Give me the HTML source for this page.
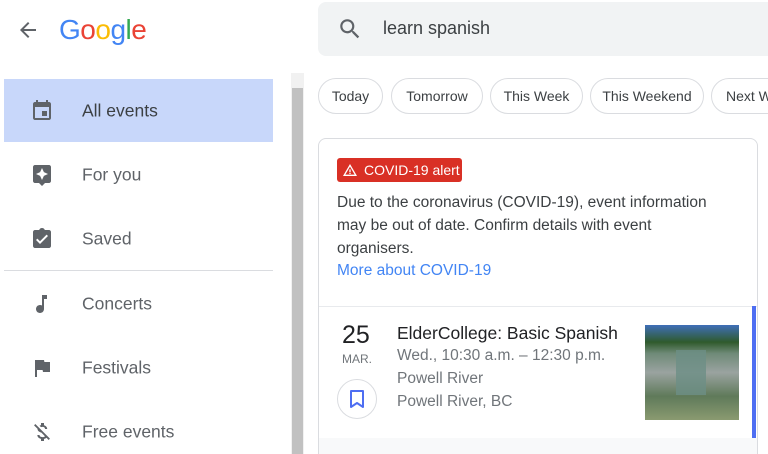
<!DOCTYPE html>
<html><head><style>
html,body{margin:0;width:768px;height:454px;overflow:hidden;background:#fff;font-family:"Liberation Sans",Arial,sans-serif;position:relative}
.a{position:absolute}
.nav{left:4px;width:269px;height:63px}
.nav span{position:absolute;left:78px;top:50%;transform:translateY(-50%);font-size:17.5px;color:#5f6368}
.nav svg{position:absolute;left:26px;top:50%;margin-top:-12px}
.chip{top:78px;height:36px;border:1px solid #dadce0;border-radius:18px;box-sizing:border-box;font-size:14px;color:#3c4043;line-height:34px;text-align:center}
.g{color:#70757a;font-size:15.5px}
</style></head><body>
<svg class="a" style="left:16px;top:18px" width="24" height="24" viewBox="0 0 24 24"><path d="M20 11H7.8l5.6-5.6L12 4l-8 8 8 8 1.4-1.4L7.8 13H20z" fill="#5f6368"/></svg>
<div class="a" style="left:59px;top:14px;font-size:28px;letter-spacing:-0.5px"><span style="color:#4285f4">G</span><span style="color:#ea4335">o</span><span style="color:#fbbc05">o</span><span style="color:#4285f4">g</span><span style="color:#34a853">l</span><span style="color:#ea4335">e</span></div>

<div class="a nav" style="top:79px;background:#c8d7fa"><svg width="24" height="24" viewBox="0 0 24 24"><path d="M17 12h-5v5h5v-5zM16 1v2H8V1H6v2H5c-1.1 0-2 .9-2 2v14c0 1.1.9 2 2 2h14c1.1 0 2-.9 2-2V5c0-1.1-.9-2-2-2h-1V1h-2zm3 18H5V8h14v11z" fill="#5f6368"/></svg><span style="color:#3c4043">All events</span></div>
<div class="a nav" style="top:143px"><svg width="24" height="24" viewBox="0 0 24 24"><path d="M19 2H5c-1.1 0-2 .9-2 2v14c0 1.1.9 2 2 2h4l3 3 3-3h4c1.1 0 2-.9 2-2V4c0-1.1-.9-2-2-2zm-5.1 10.9L12 17l-1.9-4.1L6 11l4.1-1.9L12 5l1.9 4.1L18 11l-4.1 1.9z" fill="#5f6368"/></svg><span>For you</span></div>
<div class="a nav" style="top:207px"><svg width="24" height="24" viewBox="0 0 24 24"><path d="M19 3h-4.2C14.4 1.8 13.3 1 12 1s-2.4.8-2.8 2H5c-1.1 0-2 .9-2 2v14c0 1.1.9 2 2 2h14c1.1 0 2-.9 2-2V5c0-1.1-.9-2-2-2zm-9 14l-4-4 1.4-1.4 2.6 2.6 6.6-6.6L18 9l-8 8z" fill="#5f6368"/></svg><span>Saved</span></div>
<div class="a" style="left:4px;top:270px;width:269px;height:1px;background:#dadce0"></div>
<div class="a nav" style="top:272px"><svg width="24" height="24" viewBox="0 0 24 24"><path d="M12 3v10.55c-.59-.34-1.27-.55-2-.55-2.21 0-4 1.79-4 4s1.79 4 4 4 4-1.79 4-4V7h3V3h-5z" fill="#5f6368"/></svg><span>Concerts</span></div>
<div class="a nav" style="top:336px"><svg width="24" height="24" viewBox="0 0 24 24"><path d="M14.4 6L14 4H5v17h2v-7h5.6l.4 2h7V6z" fill="#5f6368"/></svg><span>Festivals</span></div>
<div class="a nav" style="top:400px"><svg width="24" height="24" viewBox="0 0 24 24"><path d="M12.5 6.9c1.78 0 2.440.85 2.5 2.1h2.21c-.07-1.72-1.12-3.3-3.21-3.81V3h-3v2.160c-.53.12-1.03.3-1.48.54l1.47 1.470c.41-.17.91-.27 1.51-.27zM5.33 4.06L4.06 5.33 7.5 8.77c0 2.08 1.56 3.21 3.91 3.91l3.51 3.51c-.34.48-1.05.91-2.42.91-2.06 0-2.87-.92-2.98-2.1h-2.2c.12 2.19 1.76 3.42 3.68 3.83V21h3v-2.15c.96-.18 1.82-.55 2.45-1.12l2.22 2.22 1.27-1.27L5.33 4.06z" fill="#5f6368"/></svg><span>Free events</span></div>

<div class="a" style="left:291px;top:73px;width:13px;height:381px;background:#f1f1f1"></div>
<div class="a" style="left:292px;top:88px;width:11px;height:366px;background:#c1c1c1"></div>

<div class="a" style="left:318px;top:2px;width:470px;height:54px;background:#f1f3f4;border-radius:8px"></div>
<svg class="a" style="left:337px;top:16px" width="26" height="26" viewBox="0 0 24 24"><path d="M15.5 14h-.79l-.28-.27A6.47 6.47 0 0016 9.5 6.5 6.5 0 109.5 16c1.61 0 3.09-.59 4.23-1.57l.27.28v.79l5 4.99L20.49 19l-4.99-5zm-6 0C7.01 14 5 11.99 5 9.5S7.01 5 9.5 5 14 7.01 14 9.5 11.99 14 9.5 14z" fill="#5f6368"/></svg>
<div class="a" style="left:383px;top:18px;font-size:18px;color:#3c4043">learn spanish</div>

<div class="a chip" style="left:318px;width:65px">Today</div>
<div class="a chip" style="left:391px;width:92px">Tomorrow</div>
<div class="a chip" style="left:490px;width:93px">This Week</div>
<div class="a chip" style="left:590px;width:114px">This Weekend</div>
<div class="a chip" style="left:711px;width:90px;text-align:left;padding-left:14px">Next Week</div>

<div class="a" style="left:318px;top:138px;width:440px;height:330px;border:1px solid #dadce0;border-radius:8px;box-sizing:border-box;background:#fff"></div>
<div class="a" style="left:337px;top:158px;width:125px;height:24px;background:#d93025;border-radius:3px;color:#fff;font-size:14px;line-height:24px"><svg style="position:absolute;left:5px;top:4px" width="16" height="16" viewBox="0 0 24 24"><path d="M12 3L1.5 21h21L12 3zm0 4l7 12H5l7-12zm-1 4v4h2v-4h-2zm0 5v2h2v-2h-2z" fill="#fff"/></svg><span style="position:absolute;left:27px">COVID-19 alert</span></div>
<div class="a" style="left:337px;top:191px;width:390px;font-size:15.5px;line-height:23px;color:#3c4043">Due to the coronavirus (COVID-19), event information may be out of date. Confirm details with event organisers.</div>
<div class="a" style="left:337px;top:262px;font-size:15.5px;color:#4285f4">More about COVID-19</div>
<div class="a" style="left:319px;top:306px;width:438px;height:1px;background:#e8eaed"></div>
<div class="a" style="left:319px;top:438px;width:438px;height:16px;background:#f8f9fa"></div>
<div class="a" style="left:752px;top:306px;width:4px;height:132px;background:#4e6ef2"></div>

<div class="a" style="left:342px;top:321px;font-size:25px;color:#202124">25</div>
<div class="a" style="left:342px;top:352px;font-size:12px;color:#70757a">MAR.</div>
<div class="a" style="left:337px;top:379px;width:40px;height:40px;border:1px solid #dadce0;border-radius:50%;box-sizing:border-box"></div>
<svg class="a" style="left:348px;top:389px" width="18" height="20" viewBox="0 0 18 20"><path d="M3 2h12v16l-6-4-6 4z" fill="none" stroke="#4e6ef2" stroke-width="2" stroke-linejoin="round"/></svg>
<div class="a" style="left:397px;top:323px;font-size:17.5px;color:#202124">ElderCollege: Basic Spanish</div>
<div class="a g" style="left:397px;top:347px">Wed., 10:30 a.m. – 12:30 p.m.</div>
<div class="a g" style="left:397px;top:370px">Powell River</div>
<div class="a g" style="left:397px;top:393px">Powell River, BC</div>
<div class="a" style="left:645px;top:325px;width:94px;height:95px;background:linear-gradient(180deg,#3f6fb8 0%,#2f5a2c 18%,#6f8a78 30%,#9aa3a0 50%,#5f7a5a 75%,#8a9a70 100%)"></div>
<div class="a" style="left:676px;top:350px;width:30px;height:45px;background:#6d8f86;opacity:.8"></div>
</body></html>
